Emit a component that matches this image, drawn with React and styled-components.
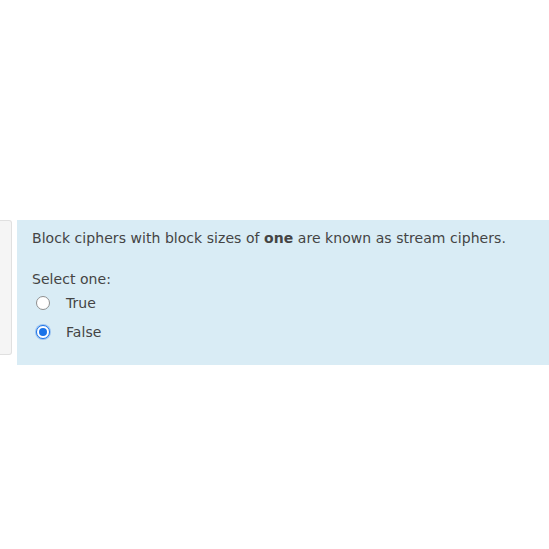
import React from "react";
import styled, { createGlobalStyle } from "styled-components";

const Global = createGlobalStyle`
  html, body { margin: 0; padding: 0; background: #fff; }
  body { font-family: "DejaVu Sans", Verdana, sans-serif; }
`;

const Page = styled.div`
  width: 549px;
  height: 549px;
  overflow: hidden;
  padding-top: 220px;
  box-sizing: border-box;
`;

const Question = styled.div`
  display: flex;
  align-items: flex-start;
  gap: 5px;
`;

const Info = styled.div`
  width: 12px;
  height: 135px;
  flex-shrink: 0;
  box-sizing: border-box;
  background: #f5f5f5;
  border: 1px solid #e0e0e0;
  border-left: none;
  border-radius: 0 3px 3px 0;
`;

const Formulation = styled.div`
  flex: 1;
  background: #d9ecf5;
  padding: 8px 15px 20px 15px;
  color: #444444;
  font-size: 14px;
  line-height: 20px;
  letter-spacing: 0.05px;
  min-height: 145px;
  box-sizing: border-box;
`;

const Prompt = styled.div`
  margin-top: 21px;
`;

const Answer = styled.div`
  display: flex;
  flex-direction: column;
  gap: 9px;
  margin-top: 4px;
`;

const Option = styled.label`
  display: flex;
  align-items: center;
  gap: 16px;
  padding-left: 4px;
`;

const Radio = styled.span`
  width: 14px;
  height: 14px;
  border-radius: 50%;
  box-sizing: border-box;
  background: #fff;
  border: 1px solid ${(p) => (p.checked ? "#1a73e8" : "#8f8f8f")};
  box-shadow: ${(p) => (p.checked ? "0 0 0 1px #9cc3f0" : "none")};
  display: flex;
  align-items: center;
  justify-content: center;
  &::after {
    content: "";
    width: 8px;
    height: 8px;
    border-radius: 50%;
    background: ${(p) => (p.checked ? "#1a73e8" : "transparent")};
  }
`;

export default function App() {
  return (
    <>
      <Global />
      <Page>
        <Question>
          <Info />
          <Formulation>
            <div>
              Block ciphers with block sizes of <b>one</b> are known as stream ciphers.
            </div>
            <Prompt>Select one:</Prompt>
            <Answer>
              <Option>
                <Radio />
                True
              </Option>
              <Option>
                <Radio checked />
                False
              </Option>
            </Answer>
          </Formulation>
        </Question>
      </Page>
    </>
  );
}
